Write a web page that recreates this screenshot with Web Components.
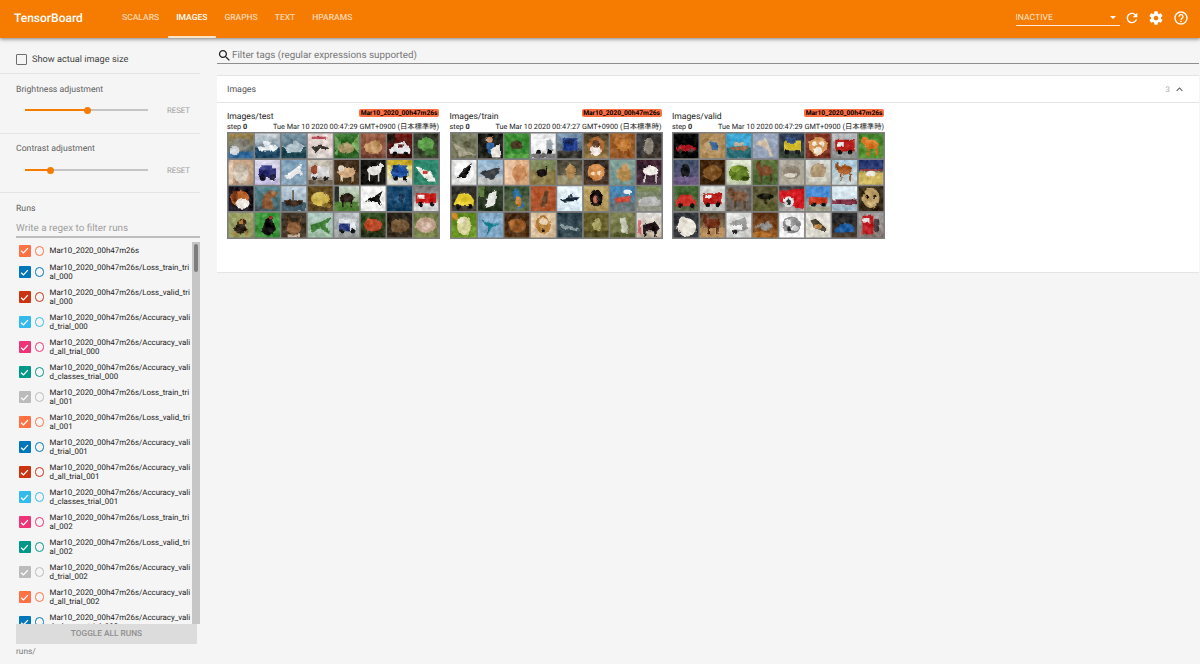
<!DOCTYPE html>
<html><head><meta charset="utf-8"><title>TensorBoard</title>
<style>html,body{margin:0;height:100%;overflow:hidden;background:#f5f5f5;font-family:Roboto,"Noto Sans CJK JP",sans-serif;text-rendering:geometricPrecision}</style>
</head><body>
<tb-app>
  <tb-header slot="header"></tb-header>
  <tb-sidebar slot="side"></tb-sidebar>
  <tb-main slot="main"></tb-main>
</tb-app>
<script>
const ICON={
refresh:"M17.65 6.35C16.2 4.9 14.21 4 12 4c-4.42 0-7.99 3.58-7.99 8s3.57 8 7.99 8c3.73 0 6.84-2.55 7.73-6h-2.08c-.82 2.33-3.04 4-5.65 4-3.31 0-6-2.69-6-6s2.69-6 6-6c1.66 0 3.14.69 4.22 1.78L13 11h7V4l-2.35 2.35z",
gear:"M19.43 12.98c.04-.32.07-.64.07-.98s-.03-.66-.07-.98l2.11-1.65c.19-.15.24-.42.12-.64l-2-3.46c-.12-.22-.39-.3-.61-.22l-2.49 1c-.52-.4-1.08-.73-1.69-.98l-.38-2.65C14.46 2.18 14.25 2 14 2h-4c-.25 0-.46.18-.49.42l-.38 2.65c-.61.25-1.17.59-1.69.98l-2.49-1c-.23-.09-.49 0-.61.22l-2 3.46c-.13.22-.07.49.12.64l2.11 1.65c-.04.32-.07.65-.07.98s.03.66.07.98l-2.11 1.65c-.19.15-.24.42-.12.64l2 3.46c.12.22.39.3.61.22l2.49-1c.52.4 1.08.73 1.69.98l.38 2.65c.03.24.24.42.49.42h4c.25 0 .46-.18.49-.42l.38-2.65c.61-.25 1.17-.59 1.69-.98l2.49 1c.23.09.49 0 .61-.22l2-3.46c.12-.22.07-.49-.12-.64l-2.11-1.65zM12 15.5c-1.93 0-3.5-1.57-3.5-3.5s1.57-3.5 3.5-3.5 3.5 1.57 3.5 3.5-1.57 3.5-3.5 3.5z",
help:"M11 18h2v-2h-2v2zm1-16C6.48 2 2 6.48 2 12s4.48 10 10 10 10-4.48 10-10S17.52 2 12 2zm0 18c-4.41 0-8-3.59-8-8s3.59-8 8-8 8 3.59 8 8-3.59 8-8 8zm0-14c-2.21 0-4 1.79-4 4h2c0-1.1.9-2 2-2s2 .9 2 2c0 2-3 1.75-3 5h2c0-2.25 3-2.5 3-5 0-2.21-1.79-4-4-4z",
search:"M15.5 14h-.79l-.28-.27C15.41 12.59 16 11.11 16 9.5 16 5.91 13.09 3 9.5 3S3 5.91 3 9.5 5.91 16 9.5 16c1.61 0 3.09-.59 4.23-1.57l.27.28v.79l5 4.99L20.49 19l-4.99-5zm-6 0C7.01 14 5 11.99 5 9.5S7.01 5 9.5 5 14 7.01 14 9.5 11.99 14 9.5 14z",
less:"M12 8l-6 6 1.41 1.41L12 10.83l4.59 4.58L18 14z"};
const svg=(n,s,c)=>`<svg width="${s}" height="${s}" viewBox="0 0 24 24" fill="${c}" style="display:block"><path d="${ICON[n]}"/></svg>`;
function def(name,css,html){
  customElements.define(name,class extends HTMLElement{
    constructor(){super();this.attachShadow({mode:"open"});}
    connectedCallback(){
      const h=typeof html==="function"?html(this):html;
      this.shadowRoot.innerHTML=`<style>${css}</style>${h}`;
    }
  });
}
def("tb-app",`:host{display:grid;grid-template-rows:38px 1fr;grid-template-columns:200px 1fr;height:664px;overflow:hidden;color:#212121}
.h{grid-column:1/3;position:relative;z-index:2;box-shadow:0 1px 4px rgba(0,0,0,.5)}
.s{min-width:0;overflow:hidden}.m{min-width:0;overflow:hidden}`,
`<div class="h"><slot name="header"></slot></div><div class="s"><slot name="side"></slot></div><div class="m"><slot name="main"></slot></div>`);

def("tb-header",`:host{display:flex;align-items:stretch;height:38px;background:#f57c00;color:#fff;padding:0 7px 0 14px;box-sizing:border-box}
.logo{font-size:12px;font-weight:500;line-height:37px;width:99.5px}
nav{display:flex}
.t{padding:0 8.5px;font-size:8.5px;font-weight:500;line-height:37px;color:rgba(255,255,255,.7);box-sizing:border-box;height:38px}
.t.a{color:#fff;border-bottom:2px solid #fce4c8}
.sp{flex:1}
.sel{width:104px;height:26px;box-sizing:border-box;border-bottom:1px solid rgba(255,255,255,.85);font-size:8.6px;line-height:36px;color:rgba(255,255,255,.8);position:relative}
.car{position:absolute;right:4px;top:16px;width:0;height:0;border:3px solid transparent;border-top:3.5px solid #fff}
.i{display:flex;align-items:center;justify-content:center;width:24.5px;height:36px}
.i:first-of-type{margin-left:1px}`,
`<div class="logo">TensorBoard</div><nav><div class="t">SCALARS</div><div class="t a">IMAGES</div><div class="t">GRAPHS</div><div class="t">TEXT</div><div class="t">HPARAMS</div></nav><div class="sp"></div>
<div class="sel">INACTIVE<span class="car"></span></div><div class="i">${svg("refresh",16,"#fff")}</div><div class="i">${svg("gear",16,"#fff")}</div><div class="i">${svg("help",16,"#fff")}</div>`);

def("tb-section",`:host{display:block;border-bottom:1px solid #e4e4e4;padding:0 0 0 16px}
.l{font-size:8.7px;color:#616161;line-height:12px;padding-top:var(--lt,10px)}`,
t=>`<div class="l">${t.getAttribute("label")}</div><slot></slot>`);

def("tb-slider",`:host{display:flex;align-items:center;height:12px;padding:var(--st,8px) 10px var(--sb,17px) 9px}
.tr{width:123px;height:2px;background:#c4c4c4;position:relative}
.f{position:absolute;left:0;top:0;height:2px;background:#f57c00}
.k{position:absolute;top:-2.5px;width:7px;height:7px;border-radius:50%;background:#f57c00;margin-left:-3.5px}
.r{margin-left:19px;font-size:7.8px;color:#9a9a9a}`,
t=>{const v=t.getAttribute("value");return `<div class="tr"><div class="f" style="width:${v}px"></div><div class="k" style="left:${v}px"></div></div><div class="r">RESET</div>`});

def("tb-run",`:host{display:flex;align-items:center;min-height:17px;padding:3px 0 3px 3px;box-sizing:border-box;width:176px}
.c{width:11.5px;height:11.5px;border-radius:1px;background:var(--c);flex:none;display:flex;align-items:center;justify-content:center}
.o{width:7.5px;height:7.5px;border:1.2px solid var(--c);border-radius:50%;margin-left:4px;flex:none}
.x{margin-left:5.5px;font-size:7.9px;line-height:9.5px;color:#212121;word-break:break-all;width:142px;flex:none}`,
t=>`<div class="c" style="--c:${t.getAttribute("color")}"><svg width="9" height="9" viewBox="0 0 12 12" fill="none" stroke="#fff" stroke-width="1.8"><path d="M1.5 6.2 4.6 9.2 10.5 2.8"/></svg></div><div class="o" style="--c:${t.getAttribute("color")}"></div><div class="x">${t.getAttribute("name")}</div>`);

const COLORS=["#ff7043","#0077bb","#cc3311","#33bbee","#ee3377","#009988","#bbbbbb"];
const P="Mar10_2020_00h47m26s";
const RUNS=["","/Loss_train_trial_000","/Loss_valid_trial_000","/Accuracy_valid_trial_000","/Accuracy_valid_all_trial_000","/Accuracy_valid_classes_trial_000","/Loss_train_trial_001","/Loss_valid_trial_001","/Accuracy_valid_trial_001","/Accuracy_valid_all_trial_001","/Accuracy_valid_classes_trial_001","/Loss_train_trial_002","/Loss_valid_trial_002","/Accuracy_valid_trial_002","/Accuracy_valid_all_trial_002","/Accuracy_valid_classes_trial_002"];

def("tb-sidebar",`:host{display:block;height:626px;overflow:hidden;width:200px}
.top{display:flex;align-items:center;height:36px;padding-top:8px;border-bottom:1px solid #e4e4e4;padding-left:16px;box-sizing:border-box;font-size:9.2px;color:#424242}
.cb{width:9px;height:9px;border:1.2px solid #6e6e6e;border-radius:1px;margin-right:5px;margin-top:-1px}
.f{padding-left:16px;font-size:9.85px;color:#9e9e9e;line-height:14px;margin-top:8px}
.ln{height:2px;background:#bdbdbd;margin:0 0 0 16px}
.wrap{position:relative;height:382px;overflow:hidden;margin:4px 0 0 16px}
.sb{position:absolute;right:0;top:0;bottom:0;width:8px;background:#c6c6c6}
.th{position:absolute;left:2px;top:2px;width:4px;height:28px;background:#7d7d7d;border-radius:2px}
.btn{margin-left:16px;width:181px;height:20px;background:#dcdcdc;border-radius:1px;font-size:8.3px;color:#8f8f8f;line-height:20px;text-align:center;font-weight:500}
.lg{margin:2px 0 0 16px;font-size:8.3px;color:#757575;line-height:12px}
tb-section.rs{border:none}
tb-section.c2{--lt:9px;--st:9px;--sb:16px}`,
()=>`<div class="top"><div class="cb"></div>Show actual image size</div>
<tb-section label="Brightness adjustment"><tb-slider value="62.5"></tb-slider></tb-section>
<tb-section class="c2" label="Contrast adjustment"><tb-slider value="25.5"></tb-slider></tb-section>
<tb-section class="rs" label="Runs" style="--lt:10px;margin-bottom:-1px"></tb-section>
<div class="f">Write a regex to filter runs</div><div class="ln"></div>
<div class="wrap"><div class="list">${RUNS.map((r,i)=>`<tb-run color="${COLORS[i%7]}" name="${P+r}"></tb-run>`).join("")}</div><div class="sb"><div class="th"></div></div></div>
<div class="btn">TOGGLE ALL RUNS</div><div class="lg">runs/</div>`);

const G={
test:[
"#b58a3a #2f5f8e|e 15 14 10 8 #8d8a80|e 22 12 5 5 #6e6a60|r 0 24 32 8 #2f6496|e 8 22 6 6 #cfd3d6",
"#eef1f3 #1f4258|r 0 18 32 14 #234a64|p #e8eef0 3,17 26,14 30,18 26,23 6,23|r 10 10 10 5 #dfe6ea",
"#8fa9b8 #1d3c4a|r 0 17 32 15 #1e4350|p #aebfc8 2,18 18,10 30,16 26,24 8,24|r 12 7 3 6 #566d78",
"#e9d9d6 #d6c9c4|r 5 4 20 3 #b8505a|p #3b3630 4,17 16,14 29,20 16,20 10,24|r 0 25 32 7 #d9d2cc",
"#3f7c34 #25561f|p #6ea05a 0,0 10,14 2,30|p #79aa60 32,0 22,14 32,26|e 15 19 10 7 #a9976a|e 10 16 4 3 #8a7c54",
"#9a5c42 #7a4a3a|e 16 18 12 8 #c79a6a|e 20 13 5 4 #b58858|r 0 27 32 5 #6b3e30",
"#7d1b16 #2a1510|r 0 0 10 12 #23150f|p #e4e6ea 3,22 9,13 22,11 30,20 29,26 4,26|e 10 26 3 3 #111|e 24 26 3 3 #111|r 14 14 6 4 #5c1a18",
"#2c2f22 #46513a|e 16 14 11 9 #5d9a4a|e 10 10 4 3 #6fb05a|e 22 24 8 5 #3e6a34",
"#caa98c #b89a80|e 16 18 10 12 #d2c6b6|e 15 11 7 6 #bdb09e|r 0 0 6 32 #e0c6ac",
"#e4e2f0 #bdb6dc|r 5 11 22 11 #2c2e6e|r 8 7 14 6 #3d4084|e 10 23 4 4 #16162c|e 23 23 4 4 #16162c",
"#7a9cb6 #8fa9bc|p #eaeaea 3,22 22,8 27,5 24,13 28,20 20,18 10,26",
"#d6d0c4 #8a7d6c|r 4 8 24 15 #d8d8d8|r 4 8 8 9 #9a4a30|e 9 24 3 3 #222|e 23 24 3 3 #222|r 0 26 32 6 #6f6252",
"#3d2a1c #4c3a20|e 16 16 11 7 #d4ac84|e 9 11 4 4 #e9dccb|r 8 20 3 8 #e2cfb4|r 22 20 3 8 #b99a74",
"#161410 #1c1a16|e 17 14 9 6 #e3e2dc|p #ecebe6 20,12 27,3 29,8 25,16|r 10 17 2 11 #dcdbd4|r 22 17 2 11 #c8c7c0",
"#e0c828 #dfe3e6|r 0 0 32 7 #c6a82a|r 6 7 20 16 #2050a0|r 6 7 8 8 #1a3a78|r 0 24 32 8 #d8d8d0|e 11 24 3 3 #111|e 23 24 3 3 #111",
"#2f8a70 #2d8064|p #f0efe8 4,8 22,16 30,28 18,28 6,14|r 12 14 6 4 #c4352a",
"#18121c #1c1820|e 15 16 12 10 #b8642e|e 18 22 9 7 #f0ebe4|e 8 13 4 8 #7a3a1a",
"#5c8c96 #3f5a60|p #8a5a36 8,30 10,12 22,4 30,10 22,16 24,30|r 0 26 8 6 #4a5860|e 24 9 3 3 #a87850",
"#cfdfec #7d8fa0|r 0 20 32 12 #405866|p #3c2a1e 3,18 28,18 25,25 6,25|r 14 5 2 14 #5c4a3c",
"#6a5024 #4d3b1c|e 16 16 12 9 #c7ac48|e 13 13 6 5 #d9c264|e 24 25 6 3 #8a7030",
"#e6e9ea #4f7d34|r 0 20 32 12 #4f7d34|e 16 15 9 6 #2a1f18|r 0 0 6 20 #2b2b2b|r 10 18 2 9 #1c1610|r 21 18 2 9 #1c1610",
"#f8f8f6 #eeeeec|p #0c0c0c 5,20 18,13 28,6 24,16 27,24 16,19",
"#1d4a6e #173f5e|e 16 17 7 5 #2b5f88|e 18 15 3 6 #14304a",
"#585a58 #e6e6e6|r 0 20 32 12 #d4d4d4|r 3 9 26 13 #c8201c|r 5 11 9 5 #e8e8e8|e 9 23 3 3 #111|e 24 23 3 3 #111",
"#a5aa72 #8a8e52|e 17 14 6 6 #3b2a1e|e 15 21 8 6 #2a2018|r 8 24 2 6 #b37a3a|r 22 24 2 6 #b37a3a|e 16 12 3 3 #b37a3a",
"#3f9a3e #3c8c3a|p #121212 8,26 14,8 22,4 27,22 18,30|e 20 6 3 3 #aa2a22",
"#3c3428 #4a3a28|e 16 20 9 8 #8a5e3a|p #6e4a2c 5,4 13,14 9,16|p #6e4a2c 27,4 19,14 23,16|r 8 28 16 4 #c8b4a0",
"#b7cfcc #9ab89c|p #3f7a36 2,16 16,12 30,6 24,16 28,28 16,20 6,26",
"#c5ccd2 #8d918e|r 6 8 22 15 #dfe2e4|r 6 14 14 10 #2a3a78|e 10 24 3 3 #111|e 24 24 3 3 #111",
"#2c5022 #39331c|e 16 16 12 8 #b8482a|e 11 12 4 4 #c65a34|r 0 26 32 6 #1e2a14",
"#27221a #3a2e1f|e 16 17 13 9 #6d5334|e 13 13 5 4 #7f6240",
"#6c7644 #7e8850|e 16 16 13 10 #bfa18c|e 16 17 7 5 #d8bdac"
],
train:[
"#7f8468 #6c6a50|p #a4a08a 0,10 16,20 32,28 10,30|e 20 14 5 4 #5a5840",
"#181814 #25251f|r 11 12 10 13 #3466a2|e 15 8 4 4 #c89878|p #e6e2dc 16,20 28,14 29,31 18,31",
"#3f9138 #2d7a2a|e 16 15 8 5 #4a3a26|r 0 26 32 6 #56a044",
"#eceef0 #dcdedf|r 4 7 17 15 #f8f8f8|r 20 9 9 13 #9aa2aa|e 10 24 3 3 #111|e 24 24 3 3 #111|r 0 26 32 6 #777",
"#8db0d6 #454038|r 0 22 32 10 #3c3834|r 7 6 19 16 #1f3a86|r 10 8 13 5 #0f1c44",
"#2d2620 #b09054|e 16 15 11 11 #a86834|e 15 22 7 7 #f0e8e0|e 16 13 5 5 #5a3a28",
"#a4622a #8d5226|e 17 15 10 8 #c07a38|e 9 10 4 5 #b26c30|r 10 20 3 10 #874a1e|r 22 20 3 10 #874a1e",
"#2a2c2e #4a3e34|e 16 16 6 11 #8c8478|r 0 0 8 32 #3a3a3c",
"#e6e6e4 #d8d8d6|e 16 16 13 13 #f6f6f6|p #141414 6,24 16,12 26,4 23,14 18,22 11,22",
"#8bb2d2 #b7bcbe|r 0 22 32 10 #bec0c0|p #3e4246 2,17 15,13 29,8 25,18 18,26 10,22",
"#e3b488 #c99a72|r 0 0 14 32 #e8c2a0|e 19 17 9 11 #c88a5a",
"#7a8d64 #81743c|r 0 14 32 18 #8a7a48|e 14 17 7 5 #1a1614|r 19 8 2 10 #1a1614",
"#36342a #8a8268|r 0 20 32 12 #98906e|e 17 15 6 9 #b48a54",
"#2e2a24 #5a4030|e 16 16 11 11 #d28c4e|e 12 17 3 3 #f0d8b8|e 20 17 3 3 #f0d8b8",
"#8aa8a0 #6c8a84|e 18 18 9 10 #b08a50|e 20 10 5 5 #c49a62",
"#3a1a24 #4a3648|e 18 14 10 6 #efe9e4|r 10 17 2 12 #e2dcd6|r 24 17 2 12 #d6d0ca|e 6 8 5 5 #2c1c24",
"#2a2a28 #4a4438|p #e0c82e 2,24 9,10 22,8 29,18 28,26|e 9 26 3 3 #111|e 24 26 3 3 #111",
"#2e3c26 #23301e|p #e6e8e4 10,28 14,8 24,6 22,24|r 0 0 8 14 #5f7a40",
"#2e4a32 #6a7048|p #2f6aa0 10,8 20,8 26,26 18,30|e 15 8 5 4 #2a6a90|e 18 20 4 7 #c28030",
"#b85a34 #a55029|p #5a4028 12,26 18,8 22,10 20,26|e 20 8 3 3 #6e4c30",
"#eef6fc #d4e6f2|p #1c2c3a 3,17 15,14 29,14 24,19 8,20|p #1c2c3a 14,14 18,9 20,14",
"#c0a868 #a68e54|e 16 15 8 11 #1a1412|e 15 17 3 5 #b5624a",
"#3384c4 #6b7a78|r 0 20 32 12 #6a7678|p #c84a3a 5,16 27,12 26,20 8,21|e 22 7 5 3 #e8f0f4",
"#5e6e48 #a0a098|r 0 0 32 6 #7e8c5c|p #b6b6b4 2,22 8,14 24,13 31,18 31,25 3,26",
"#507a14 #78a22a|e 16 17 9 12 #d4d29a|e 12 10 5 4 #e8e4c4|r 0 0 8 9 #cc8a2a",
"#88aecc #7ea4c2|p #157a8c 3,8 16,14 28,14 18,19 11,30 13,18",
"#3a2414 #5e3c1c|e 17 17 11 9 #8f5526|e 9 13 4 4 #a8662e",
"#e0c8a8 #d4ba96|e 16 15 10 12 #b8803e|e 16 12 6 5 #e6d2b0|e 16 22 2 2 #1c1410",
"#263a44 #4a5a60|p #8a9a9e 3,14 28,20 25,24 6,20|r 0 24 32 8 #34464e",
"#5e5a28 #6c6430|e 17 17 5 10 #aaa468|r 0 24 32 8 #4f4a22",
"#84885a #6c7040|p #c0c2b0 12,8 20,6 23,26 17,30|r 0 26 32 6 #5a5e34",
"#e8eaea #b8a68c|p #211418 8,16 24,12 30,20 26,24 26,31 24,31 22,24 12,24 11,31 9,31|r 2 10 4 18 #cf6a72"
],
valid:[
"#050505 #080808|p #a81820 3,20 10,15 20,14 29,18 28,22 4,23|e 9 22 2.5 2.5 #333|e 24 22 2.5 2.5 #333",
"#a88654 #b08e5c|e 16 16 12 11 #b8986a|p #3f6a9c 12,10 22,12 23,22 16,22|e 8 8 3 3 #9c7a4a",
"#38a4d0 #7a9098|r 0 0 32 15 #40a8d4|r 0 18 32 14 #2a6a72|p #9a6a4a 4,18 28,16 26,21 8,22|r 10 11 12 5 #c8b49c",
"#a4b0c6 #8c98ae|p #d8c8b0 14,6 17,6 26,30 22,30|e 12 13 8 4 #cbb8a0",
"#2a3864 #3a4428|r 6 9 22 13 #cdb628|r 9 5 12 7 #3a5888|e 10 24 3 3 #111|e 24 24 3 3 #111",
"#8a3a26 #6a281c|e 16 16 12 12 #d69a5c|e 11 13 3 3 #f4e8d8|e 21 13 3 3 #f4e8d8|e 16 22 5 5 #f0e4d4",
"#ccd0d4 #7a7a78|r 4 8 25 15 #b5201c|r 7 11 8 6 #e8e8e8|e 10 24 3 3 #111|e 23 24 3 3 #111",
"#3c7828 #5f9a38|e 17 14 9 6 #d87a2a|e 8 9 5 5 #d87a2a|r 11 18 3 11 #c86c22|r 22 18 3 11 #c86c22",
"#3a4e62 #6a5880|e 15 14 6 9 #14161a|r 0 22 32 10 #6e5e86",
"#4a2a10 #2c1a08|e 16 16 12 10 #7a5026|e 12 12 5 4 #8a5e2e",
"#dce4d0 #c0c8a8|e 16 17 13 10 #5f7c24|e 12 12 6 4 #84a038|e 24 24 5 3 #3a4c14",
"#6a7a44 #3f5a2a|e 16 14 10 7 #7a4a2c|e 7 8 3 5 #6c4026|r 10 18 2 10 #5a3a20|r 22 18 2 10 #5a3a20",
"#a8a498 #b8b0a0|e 16 16 11 9 #8c8070|e 14 20 8 3 #d8d2c4",
"#d6dcd8 #b8b0a0|e 16 15 10 11 #a89070|e 15 10 6 5 #b8a280|r 4 22 24 6 #cfcfc4",
"#a0c4dc #d0d4cc|e 16 13 9 6 #a85a26|e 7 8 3 5 #8a4a20|r 10 17 2 11 #884a22|r 22 17 2 11 #884a22",
"#28406c #c8b46c|r 0 0 32 14 #2a3a70|r 0 16 32 16 #d0b860|r 2 12 28 2 #b04030|e 16 18 6 4 #e8e4dc",
"#3a6a2c #5c5a48|p #c83028 3,20 9,11 23,11 29,20 28,25 4,26|e 9 25 3 3 #111|e 24 25 3 3 #111",
"#dce0dc #b8b8b0|r 4 9 24 14 #b8201c|r 7 11 8 5 #e8e8e8|e 10 24 3 3 #111|e 23 24 3 3 #111",
"#787470 #62584e|e 16 13 11 7 #805a40|e 6 8 4 5 #6c4a34|r 10 18 3 11 #523a28|r 22 18 3 11 #523a28",
"#514c30 #6a683c|e 16 13 11 4 #1f1c12|r 15 16 1.5 11 #1c1a10|r 0 23 32 9 #5a5c30",
"#2a2a2c #c8c4c0|p #d01c22 0,6 32,3 32,30 0,20|e 12 20 7 7 #e0e0e0|e 12 20 3 3 #333",
"#3a7cc4 #c0c4a8|r 0 0 32 14 #4a8ad0|r 4 14 24 10 #c83a20|e 10 24 3 3 #111|e 23 24 3 3 #111|r 0 26 32 6 #a4a48c",
"#e8f2f8 #bcd0de|r 0 17 32 6 #7a3040|r 0 23 32 9 #9fb6c6",
"#40331f #2c2214|e 16 15 11 13 #b89a64|e 11 13 2 2 #221a10|e 21 13 2 2 #221a10|e 16 22 5 3 #d0b67e",
"#2e3238 #3a3a3c|e 17 19 12 12 #ebe6dc|e 12 11 5 6 #e0dace",
"#3c3026 #c8a070|r 0 20 32 12 #bc9464|e 16 14 10 6 #6e3018|e 7 9 3 5 #5e2814|r 10 18 3 10 #4a2010|r 21 18 3 10 #4a2010",
"#e8e8e6 #c8c8c4|p #9a9a98 4,14 24,6 29,22 12,26|r 6 16 14 6 #f0f0ee|e 11 25 3 3 #222",
"#462410 #a86628|p #8e8e8c 4,18 20,10 26,18 16,24|p #b0702a 0,26 12,24 30,30 0,32",
"#f6f6f6 #eeeeee|e 16 16 12 11 #909090|e 12 13 4 4 #e8e8e8|e 20 20 5 3 #d0d0d0|e 13 21 3 3 #2c2c2c",
"#e6e4de #d4d0c4|p #443c2c 6,10 13,8 28,22 24,24 12,20|e 16 18 5 3 #c89050",
"#1c1c1e #5a4834|r 0 0 32 14 #2a2a2c|p #1f5a9c 3,22 10,15 22,14 29,20 28,25 4,26",
"#b8b8b8 #70605a|r 5 4 14 24 #c02428|r 6 7 8 6 #e4e4e4|e 23 16 4 10 #483c3c"
]};
let uid=0;
function cell(d,x,y){
  const [h,...sh]=d.split("|");const [a,b]=h.split(" ");
  const n=++uid;
  const f=`<filter id="f${n}" filterUnits="userSpaceOnUse" x="-8" y="-8" width="48" height="48" color-interpolation-filters="sRGB"><feTurbulence type="fractalNoise" baseFrequency=".15" numOctaves="3" seed="${n}" result="n"/><feDisplacementMap in="SourceGraphic" in2="n" scale="4" xChannelSelector="R" yChannelSelector="G" result="d"/><feColorMatrix in="n" type="matrix" values="1 0 0 0 0 1 0 0 0 0 1 0 0 0 0 0 0 0 0 1" result="g"/><feComposite in="d" in2="g" operator="arithmetic" k1="0" k2="1" k3=".3" k4="-.15" result="t"/><feGaussianBlur in="t" stdDeviation=".6"/></filter>`;
  let s=`<defs><linearGradient id="l${n}" x1="0" y1="0" x2="0" y2="1"><stop offset="0" stop-color="${a}"/><stop offset="1" stop-color="${b}"/></linearGradient>${f}</defs><rect x="-8" y="-8" width="48" height="48" fill="url(#l${n})"/>`;
  for(const q of sh){const t=q.split(" ");
    if(t[0]==="e")s+=`<ellipse cx="${t[1]}" cy="${t[2]}" rx="${t[3]}" ry="${t[4]}" fill="${t[5]}"/>`;
    else if(t[0]==="r")s+=`<rect x="${t[1]}" y="${t[2]}" width="${t[3]}" height="${t[4]}" fill="${t[5]}"/>`;
    else s+=`<polygon fill="${t[1]}" points="${t.slice(2).join(" ")}"/>`;}
  return `<svg x="${x}" y="${y}" width="32" height="32" viewBox="0 0 32 32"><g filter="url(#f${n})">${s}</g></svg>`;
}
def("tb-thumbs",`:host{display:block;width:213px;height:107px}svg{display:block}`,
t=>{const k=G[t.getAttribute("set")];let s="";k.forEach((d,i)=>{s+=cell(d,2+(i%8)*34,2+Math.floor(i/8)*34)});
 return `<svg width="213" height="107" viewBox="0 0 274 138" preserveAspectRatio="none"><rect width="274" height="138" fill="#7f7f7f"/>${s}</svg>`});

def("tb-image-card",`:host{display:block;width:213px;margin-right:9.5px}
.r1{display:flex;justify-content:space-between;align-items:flex-start;height:14px}
.n{font-size:8.6px;line-height:13px;color:#212121;margin-top:2px}
.tag{background:#ff7043;border-radius:2px;color:#000;font-size:6.7px;font-weight:700;line-height:8px;height:8px;padding:0 1.5px;margin-right:1px;white-space:nowrap}
.r2{display:flex;justify-content:space-between;font-size:7.3px;line-height:9px;color:#212121;height:10px;margin-top:-1px;white-space:nowrap}
.r2 div:last-child{margin-right:1px}
b{font-weight:700}`,
t=>`<div class="r1"><div class="n">${t.getAttribute("name")}</div><div class="tag">${P}</div></div>
<div class="r2"><div>step <b>0</b></div><div>${t.getAttribute("time")}</div></div><tb-thumbs set="${t.getAttribute("set")}"></tb-thumbs>`);

def("tb-main",`:host{display:block;padding:0 1px 0 17px;height:626px;box-sizing:border-box}
.filter{display:flex;align-items:center;height:26px;padding-top:10px;border-bottom:1px solid #8e8e8e;box-sizing:border-box;font-size:9.8px;color:#757575}
.pane{margin-top:11px;background:#fff;border:1px solid #e4e4e4;border-width:1px 0 1px 0;height:198px;box-sizing:border-box}
.ph{display:flex;align-items:center;justify-content:space-between;height:27px;padding-top:1px;border-bottom:1px solid #e4e4e4;padding-left:10px;padding-right:13px;box-sizing:border-box;font-size:8.8px;color:#555}
.ph span{display:flex;align-items:center;color:#aaa;font-size:7.8px;gap:3px}
.cards{display:flex;padding:5.5px 0 0 10px}`,
()=>`<div class="filter">${svg("search",15,"#212121")}Filter tags (regular expressions supported)</div>
<div class="pane"><div class="ph">Images<span>3 ${svg("less",13,"#616161")}</span></div>
<div class="cards"><tb-image-card name="Images/test" set="test" time="Tue Mar 10 2020 00:47:29 GMT+0900 (日本標準時)"></tb-image-card>
<tb-image-card name="Images/train" set="train" time="Tue Mar 10 2020 00:47:27 GMT+0900 (日本標準時)"></tb-image-card>
<tb-image-card name="Images/valid" set="valid" time="Tue Mar 10 2020 00:47:29 GMT+0900 (日本標準時)"></tb-image-card></div></div>`);
</script>
</body></html>
